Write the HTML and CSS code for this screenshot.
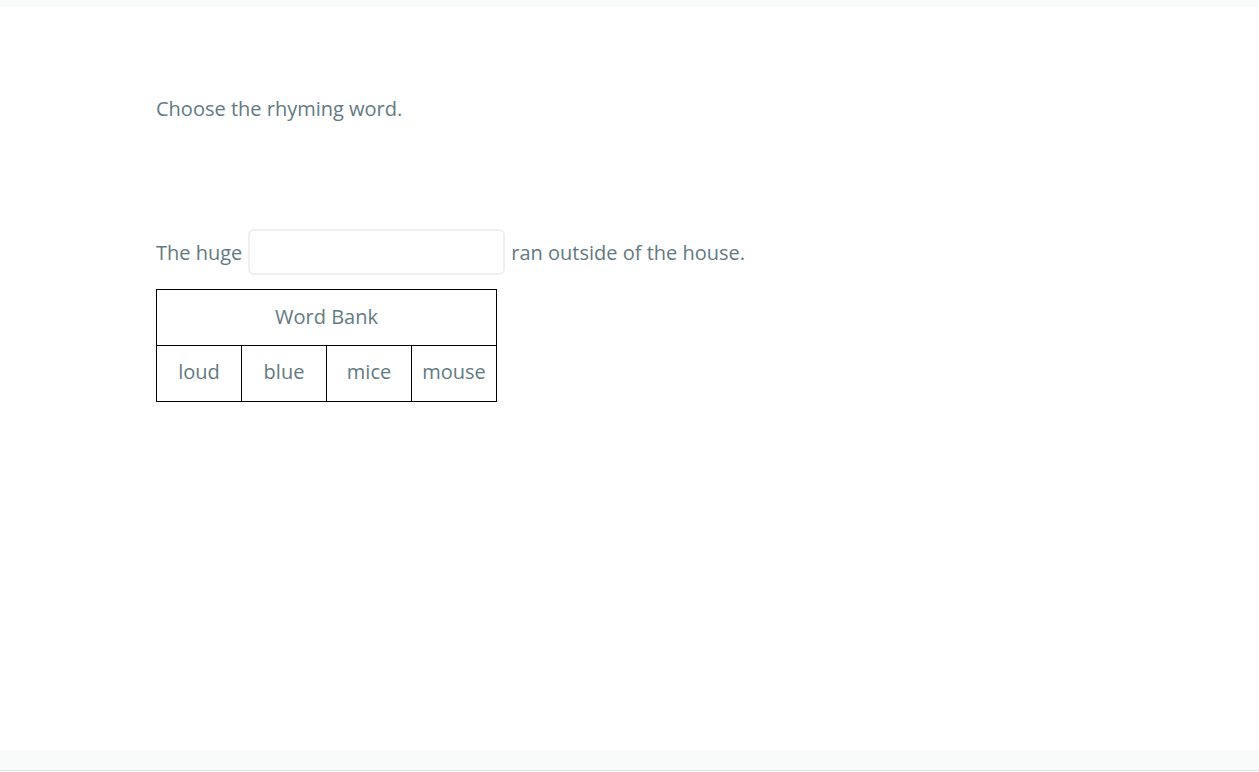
FILE: index.html
```html
<!DOCTYPE html>
<html lang="en">

<head>
    <meta charset="UTF-8" />
    <meta name="viewport" content="width=device-width, initial-scale=1" />
    <title>Rhyming Word</title>
    <link rel="stylesheet" href="styles.css">
</head>

<body>
    <div class="pagina">
        <div class="barra-superior"></div>

        <div class="contenido">
            <p class="pregunta">Choose the rhyming word.</p>

            <div class="oracion">
                <span>The huge</span>
                <input type="text" class="caja-respuesta">
                <span>ran outside of the house.</span>
            </div>

            <table class="banco-palabras">
                <thead>
                    <tr>
                        <th colspan="4">Word Bank</th>
                    </tr>
                </thead>
                <tbody>
                    <tr>
                        <td>loud</td>
                        <td>blue</td>
                        <td>mice</td>
                        <td>mouse</td>
                    </tr>
                </tbody>
            </table>
        </div>

        <div class="barra-inferior"></div>
    </div>
</body>

</html>
```

FILE: styles.css
```css
body {
    font-family: "Open Sans", "Noto Sans", sans-serif;
    margin: 0;
    background-color: white;
    color: #637a80;
}

.pagina {
    min-height: 772px;
    display: flex;
    flex-direction: column;
}

.barra-superior {
    height: 7px;
    background-color: #f9fbfb;
}

.contenido {
    flex: 1;
    padding: 90px 0 0 156px;
}

.pregunta {
    margin: 0;
    font-size: 20px;
    line-height: 24px;
}

.oracion {
    display: flex;
    align-items: center;
    gap: 6px;
    margin-top: 108px;
    font-size: 20px;
}

.caja-respuesta {
    width: 257px;
    height: 46px;
    box-sizing: border-box;
    border: 2px solid #eef0f0;
    border-radius: 6px;
    outline: none;
}

.banco-palabras {
    border-collapse: collapse;
    margin-top: 14px;
    font-size: 20px;
}

.banco-palabras th,
.banco-palabras td {
    border: 1px solid #000;
    text-align: center;
    font-weight: normal;
    padding: 0;
}

.banco-palabras th {
    height: 53px;
    padding-bottom: 2px;
}

.banco-palabras td {
    width: 84px;
    height: 51px;
    padding-bottom: 4px;
}

.barra-inferior {
    height: 20px;
    margin-bottom: 1px;
    background-color: #f9fbfb;
    border-bottom: 1px solid #e3e7e7;
}
```
